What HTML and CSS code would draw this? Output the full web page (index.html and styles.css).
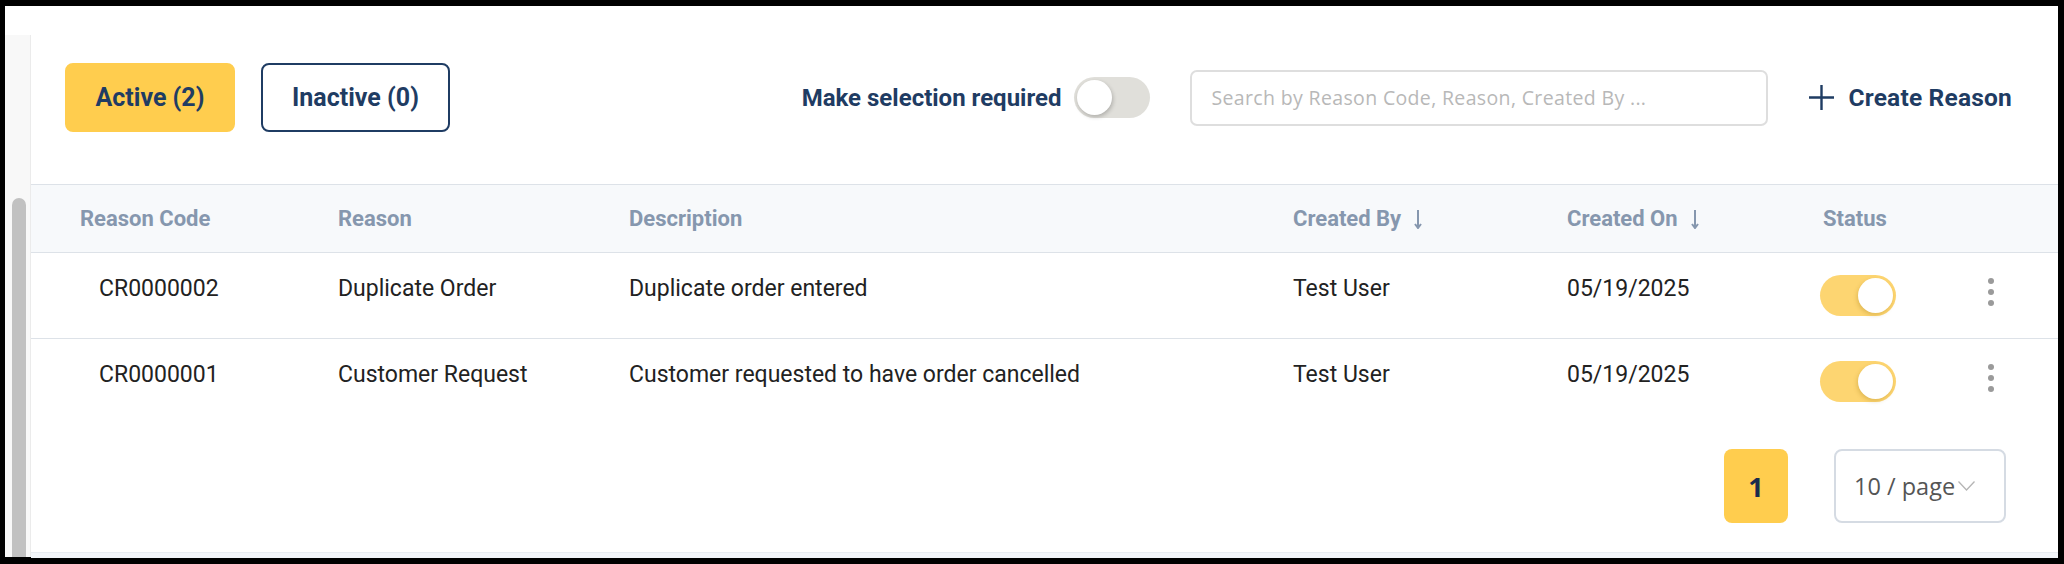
FILE: index.html
```html
<!DOCTYPE html>
<html lang="en">
<head>
  <meta charset="UTF-8">
  <meta name="viewport" content="width=device-width, initial-scale=1">
  <title>Cancel Reasons</title>
  <link rel="stylesheet" href="styles.css">
</head>
<body>
  <div class="frame">
    <!-- fake scrollbar gutter -->
    <aside class="gutter"><div class="thumb"></div></aside>

    <main class="panel">
      <div class="toolbar">
        <button class="tab tab-active">Active (2)</button>
        <button class="tab">Inactive (0)</button>
        <div class="spacer"></div>
        <span class="req-label">Make selection required</span>
        <span class="switch switch-off"><span class="knob"></span></span>
        <input class="search" type="text" placeholder="Search by Reason Code, Reason, Created By ...">
        <a class="create" href="#">
          <svg class="plus" width="27" height="27" viewBox="0 0 27 27"><path d="M13.5 1v25M1 13.5h25" stroke="#1f3c63" stroke-width="2.4" fill="none"/></svg>
          Create Reason
        </a>
      </div>

      <div class="table">
        <div class="row head">
          <div class="cell first">Reason Code</div>
          <div class="cell">Reason</div>
          <div class="cell">Description</div>
          <div class="cell">Created By <svg class="sort" width="10" height="20" viewBox="0 0 10 20"><path d="M5 1v18M2 15l3 4 3-4" stroke="#8697ae" stroke-width="2" fill="none"/></svg></div>
          <div class="cell">Created On <svg class="sort" width="10" height="20" viewBox="0 0 10 20"><path d="M5 1v18M2 15l3 4 3-4" stroke="#8697ae" stroke-width="2" fill="none"/></svg></div>
          <div class="cell">Status</div>
          <div class="cell"></div>
        </div>

        <div class="row">
          <div class="cell first">CR0000002</div>
          <div class="cell">Duplicate Order</div>
          <div class="cell">Duplicate order entered</div>
          <div class="cell">Test User</div>
          <div class="cell">05/19/2025</div>
          <div class="cell ctl"><span class="switch switch-on"><span class="knob"></span></span></div>
          <div class="cell ctl"><span class="kebab"><i></i><i></i><i></i></span></div>
        </div>

        <div class="row last">
          <div class="cell first">CR0000001</div>
          <div class="cell">Customer Request</div>
          <div class="cell">Customer requested to have order cancelled</div>
          <div class="cell">Test User</div>
          <div class="cell">05/19/2025</div>
          <div class="cell ctl"><span class="switch switch-on"><span class="knob"></span></span></div>
          <div class="cell ctl"><span class="kebab"><i></i><i></i><i></i></span></div>
        </div>
      </div>

      <div class="pager">
        <span class="page-num">1</span>
        <div class="page-size">
          10 / page
          <svg width="17" height="10" viewBox="0 0 17 10"><path d="M0.5 0.5l8 8.5 8-8.5" stroke="#b5b5b5" stroke-width="1.3" fill="none"/></svg>
        </div>
      </div>

      <div class="panel-foot"></div>
    </main>
  </div>
</body>
</html>
```

FILE: styles.css
```css
/* Reset and page frame */
* {
  box-sizing: border-box;
  margin: 0;
  padding: 0;
}
body {
  background: #000;
  height: 564px;
  padding: 6px 6px 7px 5px;
  font-family: Roboto, "Liberation Sans", sans-serif;
  overflow: hidden;
}
.frame {
  background: #fff;
  height: 100%;
  display: flex;
}
/* Scrollbar gutter on the left */
.gutter {
  width: 26px;
  margin-top: 29px;
  background: #f8f8f8;
  border-right: 1px solid #ebebeb;
  display: flex;
  flex-direction: column;
  padding-left: 7px;
}
.thumb {
  width: 14px;
  margin-top: 163px;
  flex: 1;
  background: #c1c1c1;
  border-radius: 7px 7px 0 0;
}
.panel {
  flex: 1;
  display: flex;
  flex-direction: column;
}
/* Top toolbar */
.toolbar {
  height: 179px;
  flex-shrink: 0;
  padding: 5px 46px 0 34px;
  display: flex;
  align-items: center;
  border-bottom: 1px solid #dde2e8;
}
.tab {
  height: 69px;
  width: 189px;
  font-family: Roboto, sans-serif;
  font-weight: 700;
  font-size: 25px;
  color: #1f3c63;
  background: #fff;
  border: 2px solid #1f3c63;
  border-radius: 8px;
  margin-left: 26px;
}
.tab-active {
  width: 170px;
  margin-left: 0;
  background: #ffcd4e;
  border-color: #ffcd4e;
}
.spacer {
  flex: 1;
}
.req-label {
  font-weight: 700;
  font-size: 24px;
  color: #1f3c63;
  margin-right: 13px;
}
/* Toggle switches */
.switch {
  width: 76px;
  height: 41px;
  border-radius: 21px;
  display: inline-flex;
  align-items: center;
  padding: 0 3px;
}
.switch-off {
  background: #e0dfda;
  margin-right: 40px;
}
.switch-on {
  background: #fdd571;
  justify-content: flex-end;
  margin-left: -3px;
}
.knob {
  width: 35px;
  height: 35px;
  border-radius: 50%;
  background: #fff;
  box-shadow: 1px 2px 4px rgba(0, 0, 0, 0.22);
}
.switch-on .knob {
  box-shadow: -1px 2px 4px rgba(160, 120, 20, 0.3);
}
.search {
  width: 578px;
  height: 56px;
  border: 2px solid #dedede;
  border-radius: 7px;
  padding: 0 19px;
  font-family: "Open Sans", sans-serif;
  font-size: 19.5px;
  letter-spacing: 0.35px;
  outline: none;
}
.search::placeholder {
  color: #b8b8b8;
}
.create {
  display: flex;
  align-items: center;
  margin-left: 40px;
  font-weight: 700;
  font-size: 24.5px;
  letter-spacing: 0.2px;
  color: #1f3c63;
  text-decoration: none;
}
.plus {
  margin-right: 13px;
}
/* Table */
.row {
  display: grid;
  grid-template-columns: 307px 291px 664px 274px 256px 143px 1fr;
  align-items: center;
  height: 86px;
  border-bottom: 1px solid #dde2e8;
  font-size: 23px;
  color: #222;
}
.row.head {
  height: 68px;
  background: #f7f9fb;
  color: #8697ae;
  font-weight: 700;
  font-size: 22px;
}
.row.last {
  border-bottom: none;
  height: 85px;
}
.cell {
  display: flex;
  align-items: center;
  padding-bottom: 15px;
}
.head .cell,
.cell.ctl {
  padding-bottom: 0;
}
.cell.first {
  padding-left: 68px;
}
.head .cell.first {
  padding-left: 49px;
}
.sort {
  margin-left: 12px;
}
.kebab {
  display: flex;
  flex-direction: column;
  gap: 5px;
  margin: 0 0 8px 22px;
}
.kebab i {
  width: 6px;
  height: 6px;
  border-radius: 50%;
  background: #9a9a9a;
}
/* Pagination */
.pager {
  display: flex;
  flex-shrink: 0;
  justify-content: flex-end;
  align-items: center;
  padding: 25px 52px 29px 0;
}
.page-num {
  width: 64px;
  height: 74px;
  border-radius: 8px;
  background: #ffcd4e;
  display: flex;
  align-items: center;
  justify-content: center;
  font-family: "Open Sans", sans-serif;
  font-weight: 700;
  font-size: 27px;
  color: #1a2b4c;
  margin-right: 46px;
}
.page-size {
  width: 172px;
  height: 74px;
  border: 2px solid #d5dbe3;
  border-radius: 8px;
  display: flex;
  align-items: center;
  padding-left: 18px;
  font-family: "Open Sans", sans-serif;
  font-size: 23.5px;
  color: #555;
}
.page-size svg {
  margin-left: 3px;
}
.panel-foot {
  flex: 1;
  min-height: 6px;
  background: #f3f6fa;
  border-top: 1px solid #e8ecf1;
}
```
